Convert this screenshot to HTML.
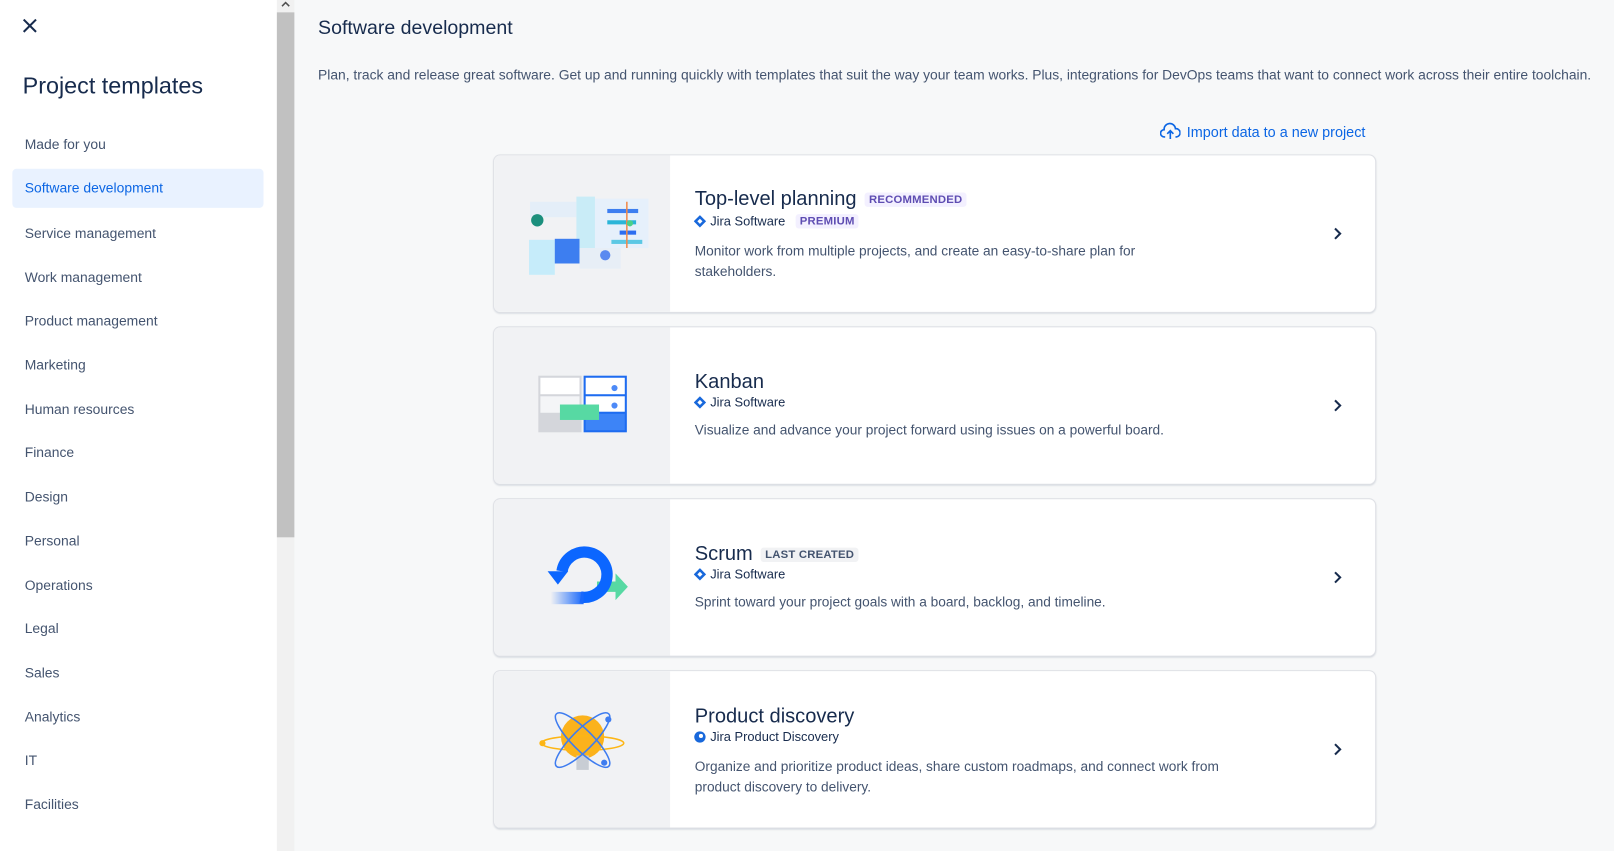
<!DOCTYPE html>
<html><head><meta charset="utf-8"><style>
*{margin:0;padding:0;box-sizing:border-box}
body{width:1614px;height:827px;overflow:hidden;font-family:"Liberation Sans",sans-serif;background:#f7f8f9;position:relative;color:#172b4d}
#w{position:absolute;left:0;top:0;width:1568px;height:804px;transform:scale(1.0293);transform-origin:0 0}
#side{position:absolute;left:0;top:0;width:269px;height:827px;background:#fff}
#sb{position:absolute;left:269px;top:0;width:17px;height:827px;background:#f1f1f1}
#thumb{position:absolute;left:269px;top:12px;width:17px;height:510px;background:#c1c1c1}
.x{position:absolute;left:21px;top:17px}
h1{position:absolute;left:22px;top:70px;font-size:22.7px;font-weight:400;color:#172b4d}
.nav{position:absolute;left:12px;width:244px;height:38px;line-height:38px;padding-left:12px;font-size:13.5px;color:#44546f;border-radius:4px}
.nav.a{background:#e9f2ff;color:#0c66e4}
h2{position:absolute;left:309px;top:17px;font-size:19px;font-weight:400}
.desc{position:absolute;left:309px;top:65px;font-size:13.45px;color:#44546f;white-space:nowrap}
.imp{position:absolute;left:1127px;top:119px;font-size:14px;color:#0c66e4;display:flex;align-items:center;gap:6px}
.card{position:absolute;left:480px;width:856px;height:152px;background:#fff;border-radius:6px;box-shadow:0 0 0 1px #dfe1e6,0 1px 2px rgba(9,30,66,.25);overflow:hidden}
.pane{position:absolute;left:0;top:0;width:171px;height:100%;background:#f1f2f4}
.t{position:absolute;left:195px;font-size:19.5px;color:#172b4d;display:flex;align-items:center;gap:8px}
.lz{font-size:11px;font-weight:700;padding:1px 4px;border-radius:3px;letter-spacing:.2px}
.prod{position:absolute;left:194px;font-size:12.5px;color:#172b4d;display:flex;align-items:center;gap:4px}
.d{position:absolute;left:195px;font-size:13.3px;color:#44546f;line-height:20px;width:520px}
.chev{position:absolute;left:814px;top:69px}
</style></head><body><div id="w">
<div id="side">
<svg class="x" width="16" height="16" viewBox="0 0 16 16"><path d="M2 2L14 14M14 2L2 14" stroke="#172b4d" stroke-width="2"/></svg>
<h1>Project templates</h1>
<div class="nav" style="top:122px">Made for you</div>
<div class="nav a" style="top:164px">Software development</div>
<div class="nav" style="top:208px">Service management</div>
<div class="nav" style="top:251px">Work management</div>
<div class="nav" style="top:293px">Product management</div>
<div class="nav" style="top:336px">Marketing</div>
<div class="nav" style="top:379px">Human resources</div>
<div class="nav" style="top:421px">Finance</div>
<div class="nav" style="top:464px">Design</div>
<div class="nav" style="top:507px">Personal</div>
<div class="nav" style="top:550px">Operations</div>
<div class="nav" style="top:592px">Legal</div>
<div class="nav" style="top:635px">Sales</div>
<div class="nav" style="top:678px">Analytics</div>
<div class="nav" style="top:720px">IT</div>
<div class="nav" style="top:763px">Facilities</div>
</div>
<div id="sb"></div><div id="thumb"></div>
<svg style="position:absolute;left:273px;top:0" width="9" height="8" viewBox="0 0 9 8"><path d="M1 6L4.5 2.5L8 6" stroke="#505050" stroke-width="1.5" fill="none"/></svg>
<h2>Software development</h2>
<div class="desc">Plan, track and release great software. Get up and running quickly with templates that suit the way your team works. Plus, integrations for DevOps teams that want to connect work across their entire toolchain.</div>
<div class="imp"><svg width="20" height="18" viewBox="0 0 20 18"><path d="M5 14H4a3.5 3.5 0 0 1 0-7 5.5 5.5 0 0 1 11-1 4 4 0 0 1 1 8h-1M10 16V8M7 11l3-3 3 3" stroke="#0c66e4" stroke-width="1.6" fill="none"/></svg>Import data to a new project</div>

<div class="card" style="top:151px"><div class="pane">
<svg width="171" height="151"><rect x="35" y="45" width="45" height="15" fill="#e4eef8"/><rect x="98" y="42" width="52" height="48" fill="#e6f0fb"/><rect x="80" y="40" width="18" height="50" fill="#c9ecf7"/><rect x="110" y="52" width="30" height="4" fill="#3d7ef0"/><rect x="110" y="63" width="28" height="4" fill="#2bb5d8"/><rect x="122" y="73" width="16" height="4" fill="#2d6ef0"/><rect x="114" y="82" width="30" height="4" fill="#5cc8e4"/><line x1="129" y1="45" x2="129" y2="90" stroke="#f08a4b" stroke-width="1.5"/><circle cx="42" cy="63" r="6" fill="#1b8f7d"/><circle cx="132" cy="66" r="3" fill="#4bd08a"/><rect x="34" y="82" width="25" height="34" fill="#c6ecfa"/><rect x="59" y="81" width="24" height="24" fill="#3d7ef0"/><rect x="83" y="90" width="40" height="20" fill="#e7eef6"/><circle cx="108" cy="97" r="5" fill="#5b8af0"/></svg>
</div>
<div class="t" style="top:31px">Top-level planning <span class="lz" style="background:#f3f0ff;color:#5e4db2">RECOMMENDED</span></div>
<div class="prod" style="top:57px"><svg width="12" height="12" viewBox="0 0 12 12"><path d="M6 0L12 6L6 12L0 6Z" fill="#1868db"/><path d="M6 3.5L8.5 6L6 8.5L3.5 6Z" fill="#fff"/></svg>Jira Software <span class="lz" style="background:#f3f0ff;color:#5e4db2;margin-left:6px">PREMIUM</span></div>
<div class="d" style="top:83px;width:475px">Monitor work from multiple projects, and create an easy-to-share plan for stakeholders.</div>
<svg class="chev" width="10" height="14" viewBox="0 0 10 14"><path d="M3 2L8 7L3 12" stroke="#172b4d" stroke-width="2" fill="none"/></svg>
</div>

<div class="card" style="top:318px"><div class="pane">
<svg width="171" height="151"><rect x="43" y="47" width="42" height="55" fill="#d4d6db"/><rect x="45" y="49" width="38" height="16" fill="#fff"/><rect x="45" y="67" width="38" height="16" fill="#f4f5f7"/><rect x="87" y="47" width="42" height="55" fill="#1e6cf0"/><rect x="89" y="49" width="38" height="16" fill="#fff"/><rect x="89" y="67" width="38" height="15" fill="#fff"/><rect x="89" y="84" width="38" height="16" fill="#3d84f7"/><rect x="64" y="75" width="38" height="15" fill="#57d9a3"/><circle cx="117" cy="59" r="3" fill="#4d8af7"/><circle cx="117" cy="76" r="3" fill="#4d8af7"/></svg>
</div>
<div class="t" style="top:42px">Kanban</div>
<div class="prod" style="top:66px"><svg width="12" height="12" viewBox="0 0 12 12"><path d="M6 0L12 6L6 12L0 6Z" fill="#1868db"/><path d="M6 3.5L8.5 6L6 8.5L3.5 6Z" fill="#fff"/></svg>Jira Software</div>
<div class="d" style="top:90px">Visualize and advance your project forward using issues on a powerful board.</div>
<svg class="chev" width="10" height="14" viewBox="0 0 10 14"><path d="M3 2L8 7L3 12" stroke="#172b4d" stroke-width="2" fill="none"/></svg>
</div>

<div class="card" style="top:485px"><div class="pane">
<svg width="171" height="151"><defs><linearGradient id="g" x1="0" x2="1"><stop offset="0" stop-color="#1868fb" stop-opacity="0"/><stop offset="1" stop-color="#1868fb"/></linearGradient></defs><path d="M100 80L118 80L118 72L130 85L118 98L118 90L100 90Z" fill="#57d9a3"/><path d="M66 70A22 22 0 1 1 84 95" stroke="#0b66ff" stroke-width="11" fill="none"/><path d="M52 70L72 70L62 83Z" fill="#0b66ff"/><rect x="55" y="90" width="32" height="12" fill="url(#g)"/></svg>
</div>
<div class="t" style="top:42px">Scrum <span class="lz" style="background:#f1f2f4;color:#44546f">LAST CREATED</span></div>
<div class="prod" style="top:66px"><svg width="12" height="12" viewBox="0 0 12 12"><path d="M6 0L12 6L6 12L0 6Z" fill="#1868db"/><path d="M6 3.5L8.5 6L6 8.5L3.5 6Z" fill="#fff"/></svg>Jira Software</div>
<div class="d" style="top:90px">Sprint toward your project goals with a board, backlog, and timeline.</div>
<svg class="chev" width="10" height="14" viewBox="0 0 10 14"><path d="M3 2L8 7L3 12" stroke="#172b4d" stroke-width="2" fill="none"/></svg>
</div>

<div class="card" style="top:652px"><div class="pane">
<svg width="171" height="151"><circle cx="86" cy="64" r="21" fill="#fbb21c"/><rect x="80" y="82" width="12" height="14" fill="#c8cdd4"/><ellipse cx="86" cy="70" rx="40" ry="7" stroke="#fdb615" fill="none" stroke-width="1.5"/><ellipse cx="86" cy="67" rx="36" ry="10" transform="rotate(45 86 67)" stroke="#3e7cf0" fill="none" stroke-width="1.5"/><ellipse cx="86" cy="67" rx="36" ry="10" transform="rotate(-45 86 67)" stroke="#3e7cf0" fill="none" stroke-width="1.5"/><circle cx="111" cy="47" r="3" fill="#3e7cf0"/><circle cx="107" cy="89" r="3" fill="#3e7cf0"/><circle cx="47" cy="70" r="3" fill="#fdb615"/></svg>
</div>
<div class="t" style="top:33px">Product discovery</div>
<div class="prod" style="top:57px"><svg width="12" height="12" viewBox="0 0 12 12"><circle cx="6" cy="6" r="5.5" fill="#1868db"/><circle cx="7" cy="5" r="2" fill="#fff"/></svg>Jira Product Discovery</div>
<div class="d" style="top:83px">Organize and prioritize product ideas, share custom roadmaps, and connect work from product discovery to delivery.</div>
<svg class="chev" width="10" height="14" viewBox="0 0 10 14"><path d="M3 2L8 7L3 12" stroke="#172b4d" stroke-width="2" fill="none"/></svg>
</div>
</div></body></html>
